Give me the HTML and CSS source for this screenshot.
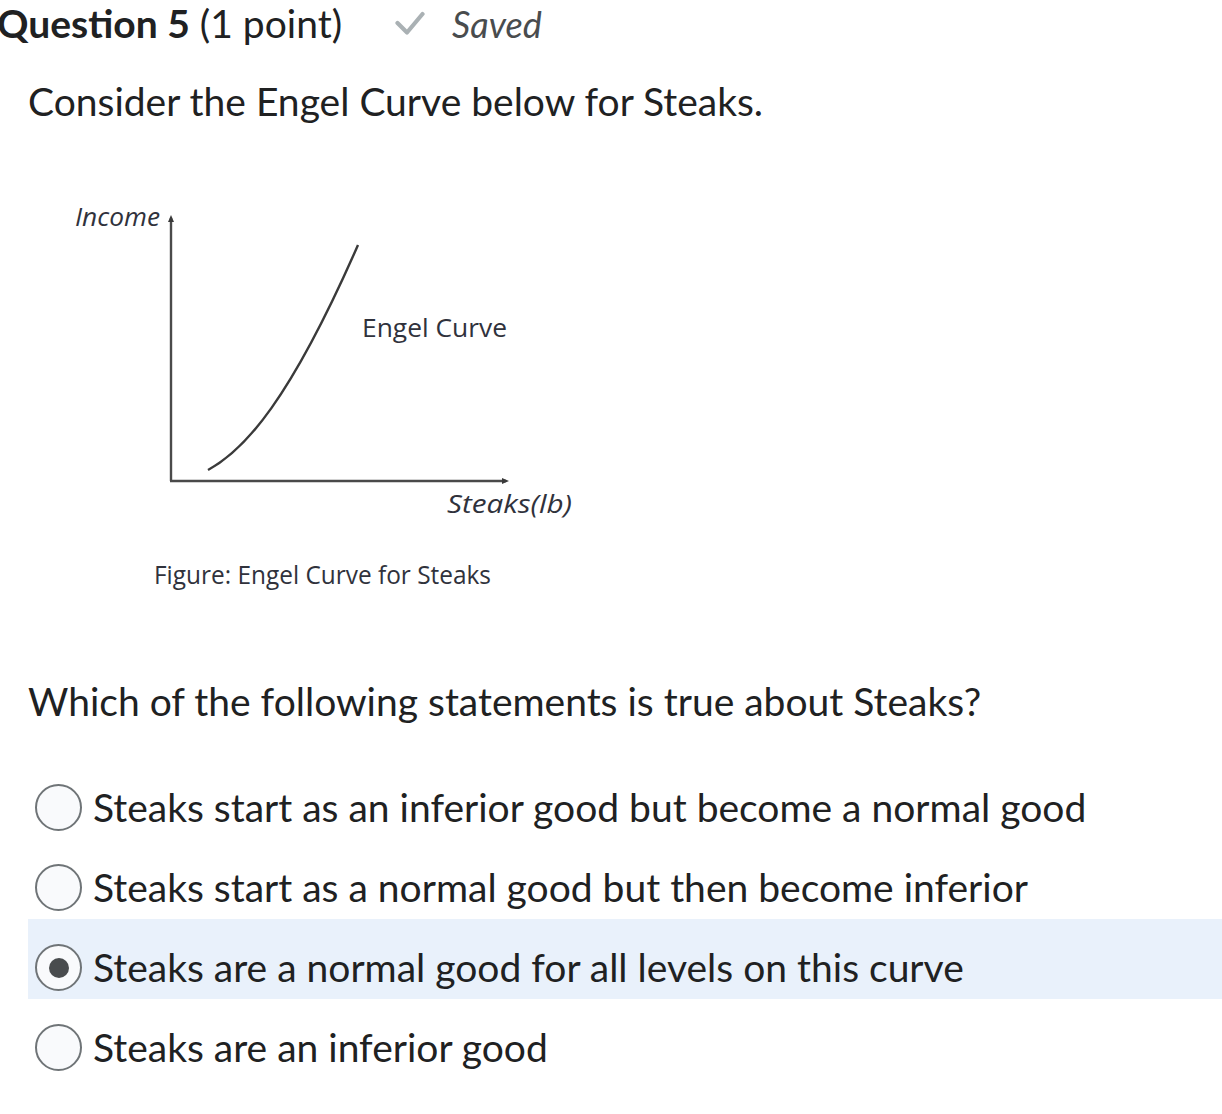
FILE: index.html
```html
<!DOCTYPE html>
<html>
<head>
<meta charset="utf-8">
<link rel="stylesheet" href="styles.css">
</head>
<body>
<div class="page">
  <div class="header">
    <h2 class="title"><strong>Question 5</strong> (1 point)</h2>
    <span class="saved">
      <svg class="check" width="30" height="26" viewBox="0 0 30 26"><path d="M2.5 13 L12 22.5 L27.5 4" fill="none" stroke="#aab1b4" stroke-width="4.2" stroke-linecap="round" stroke-linejoin="round"/></svg>
      <em>Saved</em>
    </span>
  </div>
  <p class="text consider">Consider the Engel Curve below for Steaks.</p>
  <svg class="figure" width="620" height="553" viewBox="0 125 620 553">
    <defs>
      <marker id="arr" markerWidth="8" markerHeight="8" refX="4" refY="4" orient="auto" markerUnits="userSpaceOnUse">
        <path d="M0,1 L7,4 L0,7 Z" fill="#3a3a3a"/>
      </marker>
    </defs>
    <text x="75" y="226" class="fig-it" font-size="26" textLength="85" lengthAdjust="spacingAndGlyphs">Income</text>
    <line x1="171" y1="481" x2="171" y2="218" stroke="#4a4a4a" stroke-width="2.4" marker-end="url(#arr)"/>
    <line x1="170" y1="481" x2="506" y2="481" stroke="#4a4a4a" stroke-width="2.4" marker-end="url(#arr)"/>
    <path d="M208,470 C245,450 290,400 358,245" fill="none" stroke="#3a3a3a" stroke-width="2.4"/>
    <text x="362" y="337" class="fig" font-size="26" textLength="145" lengthAdjust="spacingAndGlyphs">Engel Curve</text>
    <text x="447" y="513" class="fig-it" font-size="26" textLength="125" lengthAdjust="spacingAndGlyphs">Steaks(lb)</text>
    <text x="154" y="584" class="fig" font-size="25" textLength="337" lengthAdjust="spacingAndGlyphs">Figure: Engel Curve for Steaks</text>
  </svg>
  <p class="text which">Which of the following statements is true about Steaks?</p>
  <div class="options">
    <label class="option"><span class="radio"></span><span class="opt-text">Steaks start as an inferior good but become a normal good</span></label>
    <label class="option"><span class="radio"></span><span class="opt-text">Steaks start as a normal good but then become inferior</span></label>
    <label class="option selected"><span class="radio checked"></span><span class="opt-text">Steaks are a normal good for all levels on this curve</span></label>
    <label class="option"><span class="radio"></span><span class="opt-text">Steaks are an inferior good</span></label>
  </div>
</div>
</body>
</html>
```
FILE: styles.css
```css
html, body {
  margin: 0;
  padding: 0;
  background: #ffffff;
}
body {
  font-family: Lato, "Open Sans", sans-serif;
  color: #202122;
  overflow: hidden;
}
.page {
  width: 1222px;
  padding-left: 28px;
  box-sizing: border-box;
}
.header {
  display: flex;
  align-items: baseline;
  height: 46.8px;
  margin-left: -31px;
}
.title {
  margin: 0;
  font-size: 39px;
  line-height: 1.2;
  font-weight: 400;
  color: #202122;
}
.title strong {
  font-weight: 700;
}
.saved {
  display: flex;
  align-items: baseline;
  margin-left: 53px;
  font-size: 36px;
  color: #494c4e;
}
.check {
  align-self: center;
  margin-right: 27px;
  position: relative;
  top: -1px;
}
.saved em {
  font-style: italic;
}
.text {
  margin: 0;
  font-size: 39px;
  line-height: 1.2;
}
.consider {
  margin-top: 31.7px;
}
.figure {
  display: block;
  margin-left: -28px;
}
.fig, .fig-it {
  font-family: "Open Sans", "DejaVu Sans", sans-serif;
  fill: #30323c;
}
.fig-it {
  font-style: italic;
}
.which {
  margin-top: 0;
}
.options {
  margin-top: 33.7px;
  display: flex;
  flex-direction: column;
}
.option {
  display: flex;
  align-items: center;
  height: 80px;
  padding-top: 18px;
  box-sizing: border-box;
  padding-left: 7px;
  gap: 11px;
}
.option.selected {
  background: #e9f1fb;
  margin-right: -28px;
}
.radio {
  width: 47px;
  height: 47px;
  border: 2px solid #6f7477;
  border-radius: 50%;
  box-sizing: border-box;
  background: #f9fafc;
  display: flex;
  align-items: center;
  justify-content: center;
  flex: none;
}
.radio.checked::after {
  content: "";
  width: 20px;
  height: 20px;
  border-radius: 50%;
  background: #494c4e;
}
.opt-text {
  font-size: 39px;
  line-height: 1.2;
}
```
